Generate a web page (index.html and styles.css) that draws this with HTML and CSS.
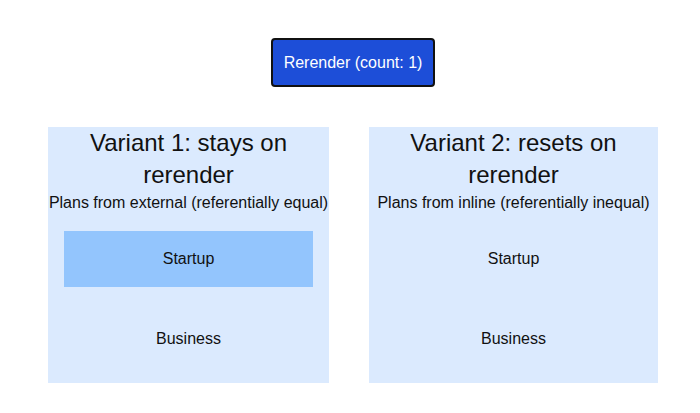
FILE: index.html
```html
<!DOCTYPE html>
<html>
<head>
<meta charset="utf-8">
<link rel="stylesheet" href="styles.css">
</head>
<body>
<main class="page">
  <button class="rerender">Rerender (count: 1)</button>
  <div class="variants">
    <section class="card card-one">
      <h2 class="card-title">Variant 1: stays on rerender</h2>
      <p class="card-sub">Plans from external (referentially equal)</p>
      <ul class="plans">
        <li class="plan selected">Startup</li>
        <li class="plan">Business</li>
      </ul>
    </section>
    <section class="card card-two">
      <h2 class="card-title">Variant 2: resets on rerender</h2>
      <p class="card-sub">Plans from inline (referentially inequal)</p>
      <ul class="plans">
        <li class="plan">Startup</li>
        <li class="plan">Business</li>
      </ul>
    </section>
  </div>
</main>
</body>
</html>
```

FILE: styles.css
```css
html, body {
  margin: 0;
  padding: 0;
  background: #ffffff;
}

body {
  font-family: "Liberation Sans", Arial, sans-serif;
  color: #111111;
}

.page {
  display: flex;
  flex-direction: column;
  align-items: center;
  padding: 38px 0 0 6px;
}

.rerender {
  font-family: "Liberation Sans", Arial, sans-serif;
  font-size: 16px;
  line-height: 24px;
  color: #ffffff;
  background: #1d4ed8;
  border: 2px solid #111111;
  border-radius: 4px;
  padding: 10.5px 10.5px;
  margin: 0;
}

.variants {
  display: flex;
  gap: 40px;
  margin-top: 40px;
}

.card {
  background: #dbeafe;
  display: flex;
  flex-direction: column;
  align-items: stretch;
  text-align: center;
  padding: 0 16px 16px;
  box-sizing: border-box;
  height: 256px;
}

.card-one { width: 281px; }
.card-two { width: 289px; }

.card-title {
  margin: 0 -16px;
  font-size: 24px;
  line-height: 32px;
  font-weight: 400;
}

.card-sub {
  margin: 0 -16px 16px;
  font-size: 16px;
  line-height: 24px;
  white-space: nowrap;
}

.plans {
  list-style: none;
  margin: 0;
  padding: 0;
  display: flex;
  flex-direction: column;
  gap: 24px;
}

.plan {
  font-size: 16px;
  line-height: 24px;
  padding: 16px 0;
}

.plan.selected {
  background: #93c5fd;
}
```
